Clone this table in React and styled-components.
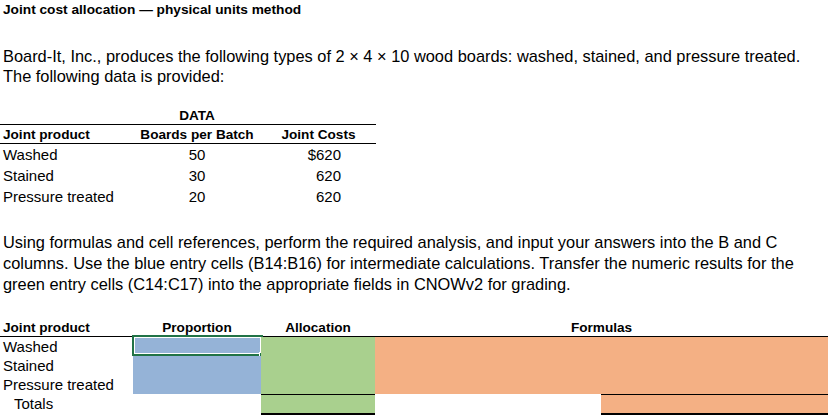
import React from 'react';
import styled, { createGlobalStyle } from 'styled-components';

const GlobalStyle = createGlobalStyle`
  body {
    margin: 0;
    background: #fff;
    color: #000;
    font-family: "Liberation Sans", Arial, sans-serif;
  }
`;

const BLUE = '#95b3d7';
const GREEN = '#a9d08e';
const ORANGE = '#f4b084';

const Page = styled.div`
  width: 828px;
  height: 416px;
  overflow: hidden;
`;

const Title = styled.div`
  font-size: 13.7px;
  font-weight: 700;
  line-height: 20px;
  padding-left: 3px;
`;

const Para = styled.p`
  font-size: 16.4px;
  line-height: ${props => props.$lh}px;
  margin: ${props => props.$top}px 0 0;
  padding-left: 3px;
  white-space: nowrap;
`;

const Table = styled.div`
  display: flex;
  flex-direction: column;
  margin-top: ${props => props.$top}px;
  width: ${props => props.$width}px;
`;

const Row = styled.div`
  box-sizing: border-box;
  display: grid;
  grid-template-columns: ${props => props.$cols};
  height: ${props => props.$h}px;
  ${props => props.$rule && 'border-bottom: 1px solid #000;'}
`;

const Cell = styled.div`
  align-items: center;
  background: ${props => props.$fill || 'transparent'};
  box-sizing: border-box;
  display: flex;
  font-size: ${props => (props.$bold ? '13.6px' : '15px')};
  font-weight: ${props => (props.$bold ? 700 : 400)};
  grid-column: ${props => props.$span || 'auto'};
  justify-content: ${props => props.$align || 'flex-start'};
  padding: 0 ${props => props.$pr || 0}px ${props => props.$pb || 0}px ${props => props.$pl || 0}px;
  position: relative;
  white-space: nowrap;
  ${props => props.$top && 'border-top: 1px solid #000;'}
  ${props => props.$bottom && 'border-bottom: 2px solid #000;'}
`;

const Selection = styled.div`
  border: 2px solid #217346;
  box-shadow: inset 0 0 0 1px #fff;
  box-sizing: border-box;
  height: 21px;
  left: -1px;
  position: absolute;
  top: -2px;
  width: 131px;
`;

const Handle = styled.div`
  background: #217346;
  border: 1px solid #fff;
  bottom: -4px;
  box-sizing: border-box;
  height: 6px;
  position: absolute;
  right: -4px;
  width: 6px;
`;

const DATA_COLS = '133px 128px 115px';
const WORK_COLS = '133px 128px 114px 226px 227px';

const dataRows = [
  ['Washed', '50', '$620'],
  ['Stained', '30', '620'],
  ['Pressure treated', '20', '620'],
];

const workRows = ['Washed', 'Stained', 'Pressure treated'];

const App = () => (
  <Page>
    <GlobalStyle />
    <Title>Joint cost allocation — physical units method</Title>
    <Para $lh={20} $top={26}>
      Board-It, Inc., produces the following types of 2 × 4 × 10 wood boards: washed, stained, and pressure treated.
      <br />
      The following data is provided:
    </Para>

    <Table $top={20} $width={376}>
      <Row $cols={DATA_COLS} $h={19} $rule>
        <Cell />
        <Cell $bold $align="center">DATA</Cell>
        <Cell />
      </Row>
      <Row $cols={DATA_COLS} $h={19} $rule>
        <Cell $bold $pl={3}>Joint product</Cell>
        <Cell $bold $align="center">Boards per Batch</Cell>
        <Cell $bold $align="center">Joint Costs</Cell>
      </Row>
      {dataRows.map(([name, boards, cost]) => (
        <Row $cols={DATA_COLS} $h={21} key={name}>
          <Cell $pl={3}>{name}</Cell>
          <Cell $align="center">{boards}</Cell>
          <Cell $align="flex-end" $pr={35}>{cost}</Cell>
        </Row>
      ))}
    </Table>

    <Para $lh={21} $top={25}>
      Using formulas and cell references, perform the required analysis, and input your answers into the B and C
      <br />
      columns. Use the blue entry cells (B14:B16) for intermediate calculations. Transfer the numeric results for the
      <br />
      green entry cells (C14:C17) into the appropriate fields in CNOWv2 for grading.
    </Para>

    <Table $top={23} $width={828}>
      <Row $cols={WORK_COLS} $h={19} $rule>
        <Cell $bold $pl={3}>Joint product</Cell>
        <Cell $bold $align="center">Proportion</Cell>
        <Cell $bold $align="center">Allocation</Cell>
        <Cell $bold $align="center" $span="4 / 6">Formulas</Cell>
      </Row>
      {workRows.map((name, i) => (
        <Row $cols={WORK_COLS} $h={19} key={name}>
          <Cell $pl={3}>{name}</Cell>
          <Cell $fill={BLUE}>
            {i === 0 && (
              <Selection>
                <Handle />
              </Selection>
            )}
          </Cell>
          <Cell $fill={GREEN} />
          <Cell $fill={ORANGE} $span="4 / 6" />
        </Row>
      ))}
      <Row $cols={WORK_COLS} $h={21}>
        <Cell $pl={14} $pb={3}>Totals</Cell>
        <Cell />
        <Cell $fill={GREEN} $top $bottom />
        <Cell />
        <Cell $fill={ORANGE} $top $bottom />
      </Row>
    </Table>
  </Page>
);

export default App;
